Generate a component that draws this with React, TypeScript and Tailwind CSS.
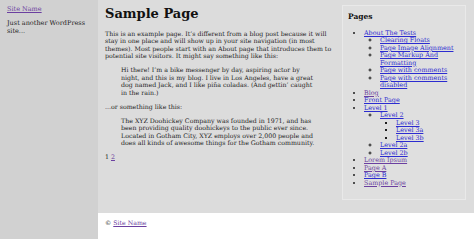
const pages = [
  {
    label: 'About The Tests',
    children: [
      { label: 'Clearing Floats' },
      { label: 'Page Image Alignment' },
      { label: 'Page Markup And Formatting' },
      { label: 'Page with comments' },
      { label: 'Page with comments disabled' },
    ],
  },
  { label: 'Blog', visited: true },
  { label: 'Front Page' },
  {
    label: 'Level 1',
    children: [
      {
        label: 'Level 2',
        children: [{ label: 'Level 3' }, { label: 'Level 3a' }, { label: 'Level 3b' }],
      },
      { label: 'Level 2a' },
      { label: 'Level 2b' },
    ],
  },
  { label: 'Lorem Ipsum', visited: true },
  { label: 'Page A', visited: true },
  { label: 'Page B' },
  { label: 'Sample Page', visited: true },
];

type PageItem = { label: string; visited?: boolean; children?: PageItem[] };

const listStyles = ['list-disc', 'list-[circle]', 'list-[square]'];

function PageList({ items, depth = 0 }: { items: PageItem[]; depth?: number }) {
  return (
    <ul className={`${listStyles[depth]} pl-[16px]`}>
      {items.map((item) => (
        <li key={item.label}>
          <a
            href="#"
            className={`underline ${item.visited ? 'text-[#6b3fa0]' : 'text-[#2b2bd0]'}`}
          >
            {item.label}
          </a>
          {item.children && <PageList items={item.children} depth={depth + 1} />}
        </li>
      ))}
    </ul>
  );
}

export default function App() {
  return (
    <div className="flex h-[239px] w-[474px] overflow-hidden font-['DejaVu_Serif',serif] text-[6.25px] leading-[7.5px] text-[#1e1e1e]">
      <aside className="w-[98px] shrink-0 bg-[#d1d1d1] px-[7px] pt-[5.5px] text-[6.5px]">
        <a href="#" className="text-[#6b3fa0] underline">Site Name</a>
        <p className="mt-[7px]">Just another WordPress site...</p>
      </aside>

      <div className="flex min-w-0 flex-1 flex-col">
        <div className="flex h-[213px] shrink-0 bg-[#dcdcdc]">
          <main className="w-[238px] shrink-0 pl-[7px] pt-[6px]">
            <h1 className="mb-[7.5px] text-[13px] font-bold leading-[16px] text-[#111]">Sample Page</h1>
            <p className="mb-[6.5px]">
              This is an example page. It’s different from a blog post because it will stay in one place and
              will show up in your site navigation (in most themes). Most people start with an About page that
              introduces them to potential site visitors. It might say something like this:
            </p>
            <blockquote className="mx-[16px] mb-[6.5px]">
              Hi there! I’m a bike messenger by day, aspiring actor by night, and this is my blog. I live in
              Los Angeles, have a great dog named Jack, and I like piña coladas. (And gettin’ caught in the
              rain.)
            </blockquote>
            <p className="mb-[6.5px]">...or something like this:</p>
            <blockquote className="mx-[16px] mb-[6.5px]">
              The XYZ Doohickey Company was founded in 1971, and has been providing quality doohickeys to the
              public ever since. Located in Gotham City, XYZ employs over 2,000 people and does all kinds of
              awesome things for the Gotham community.
            </blockquote>
            <p>
              1 <a href="#" className="text-[#6b3fa0] underline">2</a>
            </p>
          </main>

          <aside className="ml-auto mr-[8px] mt-[5px] h-[195px] w-[124px] border border-[#e9e9e9] bg-[#dfdfdf] px-[5px] pt-[6px] text-[6.4px]">
            <h2 className="text-[7.5px] font-bold leading-[9px] text-[#111]">Pages</h2>
            <div className="mt-[8.75px]">
              <PageList items={pages} />
            </div>
          </aside>
        </div>

        <footer className="flex-1 bg-white pl-[7px] pt-[6px]">
          © <a href="#" className="text-[#6b3fa0] underline">Site Name</a>
        </footer>
      </div>
    </div>
  );
}
